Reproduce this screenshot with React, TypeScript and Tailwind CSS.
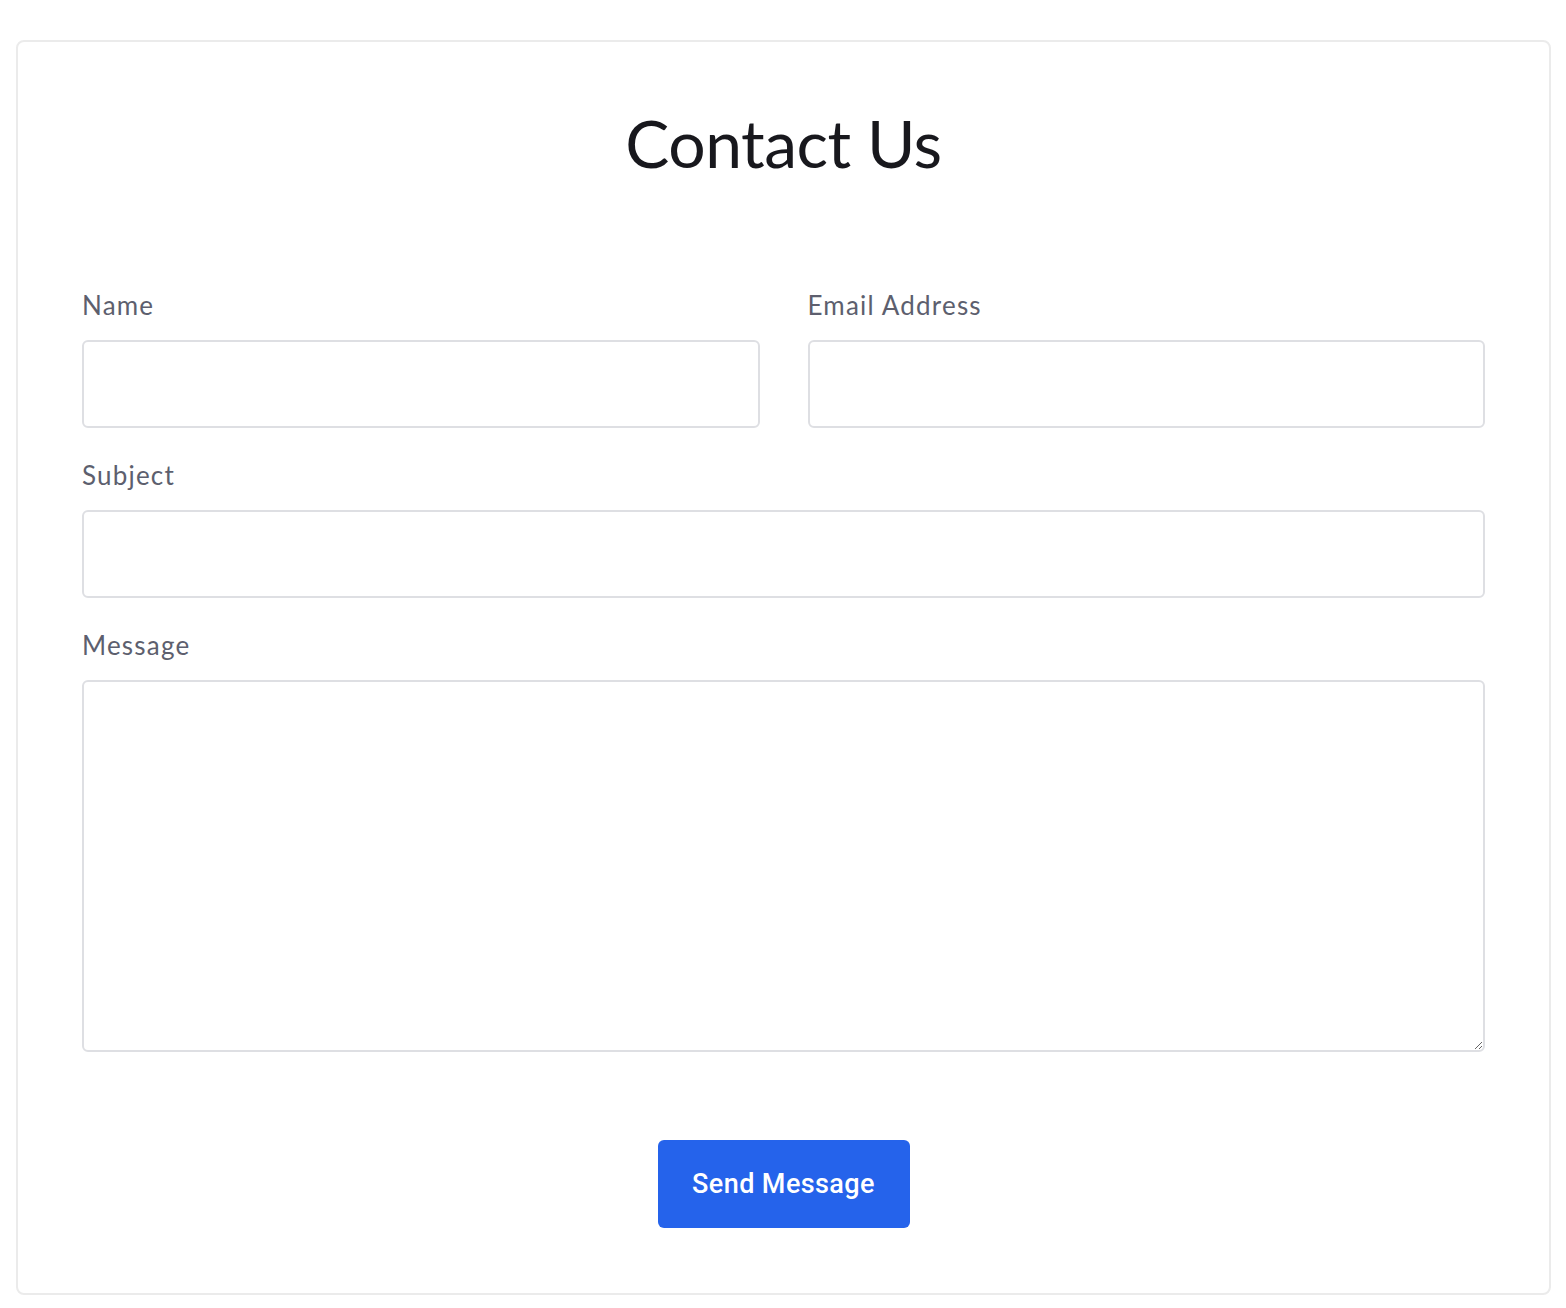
export default function App() {
  const labelCls = 'block text-[26px] leading-[38px] tracking-[1.2px] text-[#5d5f6e] mb-4';
  const inputCls =
    'block w-full h-[88px] rounded-md border-2 border-[#dedfe3] bg-white px-4 text-[22px] outline-none';

  return (
    <div className="min-h-screen bg-white pt-10 pb-[14px]" style={{ fontFamily: 'Lato, "Noto Sans", sans-serif' }}>
      <div className="ml-4 w-[1535px] rounded-lg border-2 border-[#ebebeb] bg-white px-16 pt-[68px] pb-[65px]">
        {/* Heading */}
        <h1 className="text-center text-[66px] leading-none font-normal text-[#18181d] tracking-[-0.5px]">
          Contact Us
        </h1>

        <form className="mt-[110px]" onSubmit={(e) => e.preventDefault()}>
          <div className="grid grid-cols-2 gap-x-12">
            <div>
              <label className={labelCls}>Name</label>
              <input type="text" className={inputCls} />
            </div>
            <div>
              <label className={labelCls}>Email Address</label>
              <input type="email" className={inputCls} />
            </div>
          </div>

          <div className="mt-7">
            <label className={labelCls}>Subject</label>
            <input type="text" className={inputCls} />
          </div>

          <div className="mt-7">
            <label className={labelCls}>Message</label>
            <textarea className="block w-full h-[372px] rounded-md border-2 border-[#dedfe3] bg-white px-4 py-3 text-[22px] outline-none resize-y" />
          </div>

          <div className="mt-[88px] flex justify-center">
            <button
              type="submit"
              className="h-[88px] w-[252px] rounded-md bg-[#2563eb] text-[27px] tracking-[0.4px] font-medium text-white"
              style={{ fontFamily: 'Roboto, sans-serif' }}
            >
              Send Message
            </button>
          </div>
        </form>
      </div>
    </div>
  );
}
